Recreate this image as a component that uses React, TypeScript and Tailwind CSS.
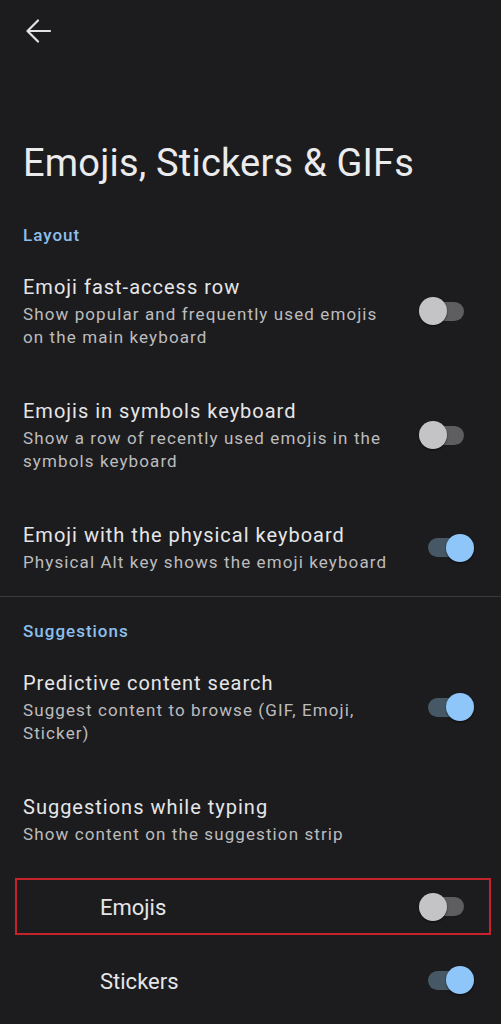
import React from "react";

const font = { fontFamily: "Roboto, 'Liberation Sans', sans-serif" };

function Toggle({ on }: { on: boolean }) {
  return (
    <div className="relative h-[28px] w-[55px] shrink-0">
      <div
        className={
          on
            ? "absolute left-[9px] top-[4.5px] h-[19px] w-[36px] rounded-full bg-[#465866]"
            : "absolute left-[9px] top-[4.5px] h-[19px] w-[36px] rounded-full bg-[#5e5e60]"
        }
      />
      <div
        className={
          on
            ? "absolute left-[27px] top-0 h-[28px] w-[28px] rounded-full bg-[#8fc6f9] shadow-[0_1px_2px_rgba(0,0,0,0.6)]"
            : "absolute left-0 top-0 h-[28px] w-[28px] rounded-full bg-[#c4c4c6] shadow-[0_1px_2px_rgba(0,0,0,0.6)]"
        }
      />
    </div>
  );
}

type Item = { title: string; sub: string[]; on?: boolean };

function SettingRow({ item }: { item: Item }) {
  return (
    <div className="flex items-center justify-between pb-[22px] pl-[23px] pr-[27px] pt-[26px]">
      <div className="flex flex-col">
        <div className="text-[20px] leading-[28px] tracking-[1px] text-[#e6e6e8]">{item.title}</div>
        <div className="mt-[2px] text-[17px] leading-[23px] tracking-[1.1px] text-[#bcbcbe]">
          {item.sub.map((s, i) => (
            <div key={i}>{s}</div>
          ))}
        </div>
      </div>
      {item.on !== undefined && <Toggle on={item.on} />}
    </div>
  );
}

const layoutItems: Item[] = [
  {
    title: "Emoji fast-access row",
    sub: ["Show popular and frequently used emojis", "on the main keyboard"],
    on: false,
  },
  {
    title: "Emojis in symbols keyboard",
    sub: ["Show a row of recently used emojis in the", "symbols keyboard"],
    on: false,
  },
  {
    title: "Emoji with the physical keyboard",
    sub: ["Physical Alt key shows the emoji keyboard"],
    on: true,
  },
];

const suggestionItems: Item[] = [
  {
    title: "Predictive content search",
    sub: ["Suggest content to browse (GIF, Emoji,", "Sticker)"],
    on: true,
  },
  {
    title: "Suggestions while typing",
    sub: ["Show content on the suggestion strip"],
  },
];

export default function App() {
  return (
    <div className="min-h-[1024px] w-full overflow-hidden bg-[#1c1c1e]" style={font}>
      {/* top bar */}
      <div className="flex h-[62px] items-center pl-[26px]">
        <svg width="26" height="24" viewBox="0 0 26 24" fill="none" stroke="#e2e2e4" strokeWidth="2.2" strokeLinecap="round" strokeLinejoin="round">
          <path d="M2 12h22" />
          <path d="M12 1.5 1.5 12 12 22.5" />
        </svg>
      </div>

      <div className="pl-[23px] pt-[78px] text-[38px] leading-[46px] tracking-[0.2px] text-[#ebebed]">
        Emojis, Stickers &amp; GIFs
      </div>

      <div className="mt-[37px] pl-[23px] text-[17px] font-medium leading-[24px] tracking-[1px] text-[#8cbfec]">
        Layout
      </div>
      {layoutItems.map((it) => (
        <SettingRow key={it.title} item={it} />
      ))}

      <div className="h-px bg-[#3a3a3c]" />

      <div className="pl-[23px] pt-[22px] text-[17px] font-medium leading-[24px] tracking-[1px] text-[#8cbfec]">
        Suggestions
      </div>
      {suggestionItems.map((it) => (
        <SettingRow key={it.title} item={it} />
      ))}

      <div className="pb-[8px] pt-[10px]">
        <div className="ml-[15px] mr-[10px] flex h-[57px] items-center justify-between border-2 border-[#c5222c] pl-[83px] pr-[15px]">
          <span className="pt-[2px] text-[22px] text-[#e6e6e8]">Emojis</span>
          <Toggle on={false} />
        </div>
      </div>
      <div className="flex h-[74px] items-center justify-between pl-[100px] pr-[27px]">
        <span className="pt-[2px] text-[22px] text-[#e6e6e8]">Stickers</span>
        <Toggle on={true} />
      </div>
    </div>
  );
}
